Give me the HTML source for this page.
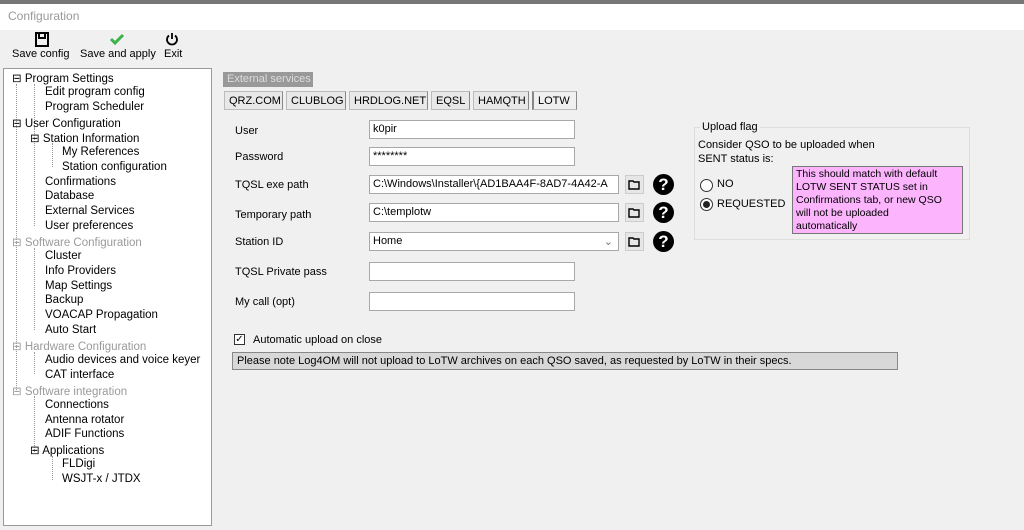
<!DOCTYPE html><html><head><style>
body{margin:0;width:1024px;height:530px;background:#f0f0f0;font-family:"Liberation Sans",sans-serif;font-size:11px;color:#000;position:relative;overflow:hidden}
.a{position:absolute;white-space:nowrap}
.in{position:absolute;background:#fff;border:1px solid #a8a8a8;height:19px;box-sizing:border-box;padding:2px 3px;font-size:11px;white-space:nowrap;overflow:hidden}
.tab{position:absolute;top:91px;height:19px;box-sizing:border-box;border:1px solid #bbb;border-right:1px solid #888;background:#e8e8e8;padding:3px 4px;font-size:11px}
.fb{position:absolute;width:19px;height:19px;box-sizing:border-box;border:1px solid #ccc;background:#e6e6e6}
.q{position:absolute;width:21px;height:21px;border-radius:50%;background:#000;color:#fff;font-weight:bold;font-size:17px;text-align:center;line-height:21px}
.t{position:absolute;white-space:nowrap;font-size:11.5px}
.g{color:#9a9a9a}
</style></head><body>
<div class="a" style="left:0;top:0;width:1024px;height:4px;background:#777"></div>
<div class="a" style="left:0;top:4px;width:1024px;height:26px;background:#fff"></div>
<div class="a" style="left:8px;top:9px;color:#999;font-size:12px">Configuration</div>
<svg class="a" style="left:34px;top:32px" width="16" height="15"><path d="M2 1h12v13H2z M5 1v5h6V1" fill="none" stroke="#000" stroke-width="2"/></svg>
<div class="a" style="left:12px;top:48px">Save config</div>
<svg class="a" style="left:109px;top:33px" width="16" height="12"><path d="M2 6l4 4 8-8" fill="none" stroke="#3cb34a" stroke-width="3"/></svg>
<div class="a" style="left:80px;top:48px">Save and apply</div>
<svg class="a" style="left:165px;top:32px" width="14" height="14"><path d="M4 3.5A5 5 0 1 0 10 3.5M7 1v6" fill="none" stroke="#000" stroke-width="1.8"/></svg>
<div class="a" style="left:164px;top:48px">Exit</div>
<div class="a" style="left:3px;top:68px;width:207px;height:456px;background:#fff;border:1px solid #999"></div>
<div class="a" style="left:16px;top:84px;width:0;height:308px;border-left:1px dotted #999"></div>
<div class="a" style="left:34px;top:84px;height:44px;border-left:1px dotted #999"></div>
<div class="a" style="left:34px;top:128px;height:98px;border-left:1px dotted #999"></div>
<div class="a" style="left:52px;top:143px;height:24px;border-left:1px dotted #999"></div>
<div class="a" style="left:34px;top:248px;height:82px;border-left:1px dotted #999"></div>
<div class="a" style="left:34px;top:352px;height:22px;border-left:1px dotted #999"></div>
<div class="a" style="left:34px;top:396px;height:56px;border-left:1px dotted #999"></div>
<div class="a" style="left:52px;top:456px;height:24px;border-left:1px dotted #999"></div>
<div class="t" style="left:12px;top:71px">⊟ Program Settings</div>
<div class="t" style="left:45px;top:86px">Edit program config</div>
<div class="t" style="left:45px;top:101px">Program Scheduler</div>
<div class="t" style="left:12px;top:116px">⊟ User Configuration</div>
<div class="t" style="left:30px;top:131px">⊟ Station Information</div>
<div class="t" style="left:62px;top:146px">My References</div>
<div class="t" style="left:62px;top:161px">Station configuration</div>
<div class="t" style="left:45px;top:176px">Confirmations</div>
<div class="t" style="left:45px;top:190px">Database</div>
<div class="t" style="left:45px;top:205px">External Services</div>
<div class="t" style="left:45px;top:220px">User preferences</div>
<div class="t g" style="left:12px;top:235px">⊟ Software Configuration</div>
<div class="t" style="left:45px;top:250px">Cluster</div>
<div class="t" style="left:45px;top:265px">Info Providers</div>
<div class="t" style="left:45px;top:280px">Map Settings</div>
<div class="t" style="left:45px;top:294px">Backup</div>
<div class="t" style="left:45px;top:309px">VOACAP Propagation</div>
<div class="t" style="left:45px;top:324px">Auto Start</div>
<div class="t g" style="left:12px;top:339px">⊟ Hardware Configuration</div>
<div class="t" style="left:45px;top:354px">Audio devices and voice keyer</div>
<div class="t" style="left:45px;top:369px">CAT interface</div>
<div class="t g" style="left:12px;top:384px">⊟ Software integration</div>
<div class="t" style="left:45px;top:399px">Connections</div>
<div class="t" style="left:45px;top:414px">Antenna rotator</div>
<div class="t" style="left:45px;top:428px">ADIF Functions</div>
<div class="t" style="left:30px;top:443px">⊟ Applications</div>
<div class="t" style="left:62px;top:458px">FLDigi</div>
<div class="t" style="left:62px;top:473px">WSJT-x / JTDX</div>
<div class="a" style="left:223px;top:72px;width:90px;height:15px;background:#999;color:#ddd;padding-left:4px;box-sizing:border-box;line-height:15px">External services</div>
<div class="tab" style="left:224px;width:59px">QRZ.COM</div>
<div class="tab" style="left:286px;width:60px">CLUBLOG</div>
<div class="tab" style="left:349px;width:79px">HRDLOG.NET</div>
<div class="tab" style="left:431px;width:39px">EQSL</div>
<div class="tab" style="left:473px;width:56px">HAMQTH</div>
<div class="tab" style="left:532px;width:45px;background:#f0f0f0;border-left:2px solid #888">LOTW</div>
<div class="a" style="left:235px;top:125px">User</div>
<div class="in" style="left:369px;top:120px;width:206px">k0pir</div>
<div class="a" style="left:235px;top:151px">Password</div>
<div class="in" style="left:369px;top:147px;width:206px">********</div>
<div class="a" style="left:235px;top:179px">TQSL exe path</div>
<div class="in" style="left:369px;top:175px;width:250px">C:\Windows\Installer\{AD1BAA4F-8AD7-4A42-A</div>
<div class="a" style="left:235px;top:209px">Temporary path</div>
<div class="in" style="left:369px;top:203px;width:250px">C:\templotw</div>
<div class="a" style="left:235px;top:236px">Station ID</div>
<div class="in" style="left:369px;top:232px;width:250px">Home<span style="position:absolute;right:5px;color:#777">⌄</span></div>
<div class="fb" style="left:625px;top:175px"></div><div class="fb" style="left:625px;top:203px"></div><div class="fb" style="left:625px;top:232px"></div>
<svg class="a" style="left:628px;top:179px" width="13" height="11"><path d="M1 2h4l1 1h5v7H1z" fill="none" stroke="#000" stroke-width="1.4"/></svg>
<svg class="a" style="left:628px;top:207px" width="13" height="11"><path d="M1 2h4l1 1h5v7H1z" fill="none" stroke="#000" stroke-width="1.4"/></svg>
<svg class="a" style="left:628px;top:236px" width="13" height="11"><path d="M1 2h4l1 1h5v7H1z" fill="none" stroke="#000" stroke-width="1.4"/></svg>
<div class="q" style="left:653px;top:174px">?</div>
<div class="q" style="left:653px;top:202px">?</div>
<div class="q" style="left:653px;top:231px">?</div>
<div class="a" style="left:235px;top:266px">TQSL Private pass</div>
<div class="in" style="left:369px;top:262px;width:206px"></div>
<div class="a" style="left:235px;top:296px">My call (opt)</div>
<div class="in" style="left:369px;top:292px;width:206px"></div>
<div class="a" style="left:234px;top:334px;width:11px;height:11px;border:1px solid #333;background:#fff;box-sizing:border-box;font-size:10px;line-height:9px;text-align:center">✓</div>
<div class="a" style="left:253px;top:334px">Automatic upload on close</div>
<div class="a" style="left:232px;top:352px;width:666px;height:18px;background:#d8d8d8;border:1px solid #888;box-sizing:border-box;padding:2px 4px">Please note Log4OM will not upload to LoTW archives on each QSO saved, as requested by LoTW in their specs.</div>
<div class="a" style="left:694px;top:127px;width:274px;height:111px;border:1px solid #ddd"></div>
<div class="a" style="left:700px;top:121px;background:#f0f0f0;padding:0 2px">Upload flag</div>
<div class="a" style="left:698px;top:138px;line-height:14px">Consider QSO to be uploaded when<br>SENT status is:</div>
<div class="a" style="left:700px;top:179px;width:11px;height:11px;border:1px solid #333;border-radius:50%;background:#fff"></div>
<div class="a" style="left:717px;top:178px">NO</div>
<div class="a" style="left:700px;top:198px;width:11px;height:11px;border:1px solid #333;border-radius:50%;background:#fff"></div>
<div class="a" style="left:703px;top:201px;width:7px;height:7px;border-radius:50%;background:#222"></div>
<div class="a" style="left:717px;top:198px">REQUESTED</div>
<div class="a" style="left:792px;top:166px;width:171px;height:68px;background:#fcb4fc;border:1px solid #777;box-sizing:border-box;padding:1px 3px;line-height:13px;font-size:10.5px">This should match with default<br>LOTW SENT STATUS set in<br>Confirmations tab, or new QSO<br>will not be uploaded<br>automatically</div>
</body></html>
